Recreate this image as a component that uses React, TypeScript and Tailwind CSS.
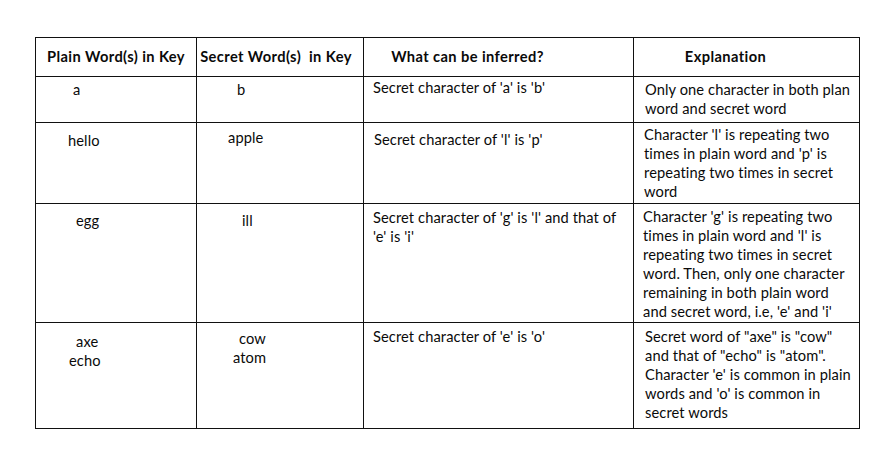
import React from 'react';

type Line = { text: string; pl: number };

interface Cell {
  pt: string;
  lines: Line[];
}

interface Row {
  h: string;
  cells: Cell[];
}

const rows: Row[] = [
  {
    h: 'h-[46px]',
    cells: [
      { pt: 'pt-[3px]', lines: [{ text: 'a', pl: 37 }] },
      { pt: 'pt-[3px]', lines: [{ text: 'b', pl: 40 }] },
      { pt: 'pt-[1px]', lines: [{ text: "Secret character of 'a' is 'b'", pl: 9 }] },
      {
        pt: 'pt-[3px]',
        lines: [
          { text: 'Only one character in both plan', pl: 11 },
          { text: 'word and secret word', pl: 11 },
        ],
      },
    ],
  },
  {
    h: 'h-[81px]',
    cells: [
      { pt: 'pt-[8px]', lines: [{ text: 'hello', pl: 32 }] },
      { pt: 'pt-[5px]', lines: [{ text: 'apple', pl: 31 }] },
      { pt: 'pt-[7px]', lines: [{ text: "Secret character of 'l' is 'p'", pl: 10 }] },
      {
        pt: 'pt-[2px]',
        lines: [
          { text: "Character 'l' is repeating two", pl: 10 },
          { text: "times in plain word and 'p' is", pl: 10 },
          { text: 'repeating two times in secret', pl: 10 },
          { text: 'word', pl: 10 },
        ],
      },
    ],
  },
  {
    h: 'h-[119px]',
    cells: [
      { pt: 'pt-[7px]', lines: [{ text: 'egg', pl: 40 }] },
      { pt: 'pt-[7px]', lines: [{ text: 'ill', pl: 45 }] },
      {
        pt: 'pt-[4px]',
        lines: [
          { text: "Secret character of 'g' is 'l' and that of", pl: 9 },
          { text: "'e' is 'i'", pl: 9 },
        ],
      },
      {
        pt: 'pt-[3px]',
        lines: [
          { text: "Character 'g' is repeating two", pl: 9 },
          { text: "times in plain word and 'l' is", pl: 9 },
          { text: 'repeating two times in secret', pl: 9 },
          { text: 'word. Then, only one character', pl: 9 },
          { text: 'remaining in both plain word', pl: 9 },
          { text: "and secret word, i.e, 'e' and 'i'", pl: 9 },
        ],
      },
    ],
  },
  {
    h: 'h-[106px]',
    cells: [
      {
        pt: 'pt-[9px]',
        lines: [
          { text: 'axe', pl: 40 },
          { text: 'echo', pl: 33 },
        ],
      },
      {
        pt: 'pt-[6px]',
        lines: [
          { text: 'cow', pl: 42 },
          { text: 'atom', pl: 36 },
        ],
      },
      { pt: 'pt-[4px]', lines: [{ text: "Secret character of 'e' is 'o'", pl: 9 }] },
      {
        pt: 'pt-[4px]',
        lines: [
          { text: 'Secret word of "axe" is "cow"', pl: 11 },
          { text: 'and that of "echo" is "atom".', pl: 11 },
          { text: "Character 'e' is common in plain", pl: 11 },
          { text: "words and 'o' is common in", pl: 11 },
          { text: 'secret words', pl: 11 },
        ],
      },
    ],
  },
];

const headers = [
  { text: 'Plain Word(s) in Key', cls: 'justify-center' },
  { text: 'Secret Word(s)\u00a0 in Key', cls: 'justify-center pr-[8px]' },
  { text: 'What can be inferred?', cls: 'justify-center pr-[62px]' },
  { text: 'Explanation', cls: 'justify-center pr-[42px]' },
];

export default function App() {
  return (
    <div className="w-[890px] h-[462px] bg-white pt-[37px] pl-[35px] text-[14.67px] leading-[19px] text-[#0a0a0a] [font-family:Lato,'Liberation_Sans',sans-serif]">
      <div className="grid w-[825px] grid-cols-[161px_167px_270px_226px] border-l border-t border-[#111]">
        {headers.map((h) => (
          <div
            key={h.text}
            className={`flex h-[39px] items-center whitespace-pre border-b border-r border-[#111] pb-[2px] font-bold tracking-[0.4px] ${h.cls}`}
          >
            {h.text}
          </div>
        ))}
        {rows.map((row, ri) =>
          row.cells.map((cell, ci) => (
            <div
              key={`${ri}-${ci}`}
              className={`border-b border-r border-[#111] tracking-[0.1px] ${row.h} ${cell.pt}`}
            >
              {cell.lines.map((l, li) => (
                <div key={li} className="whitespace-pre" style={{ paddingLeft: l.pl }}>
                  {l.text}
                </div>
              ))}
            </div>
          ))
        )}
      </div>
    </div>
  );
}
